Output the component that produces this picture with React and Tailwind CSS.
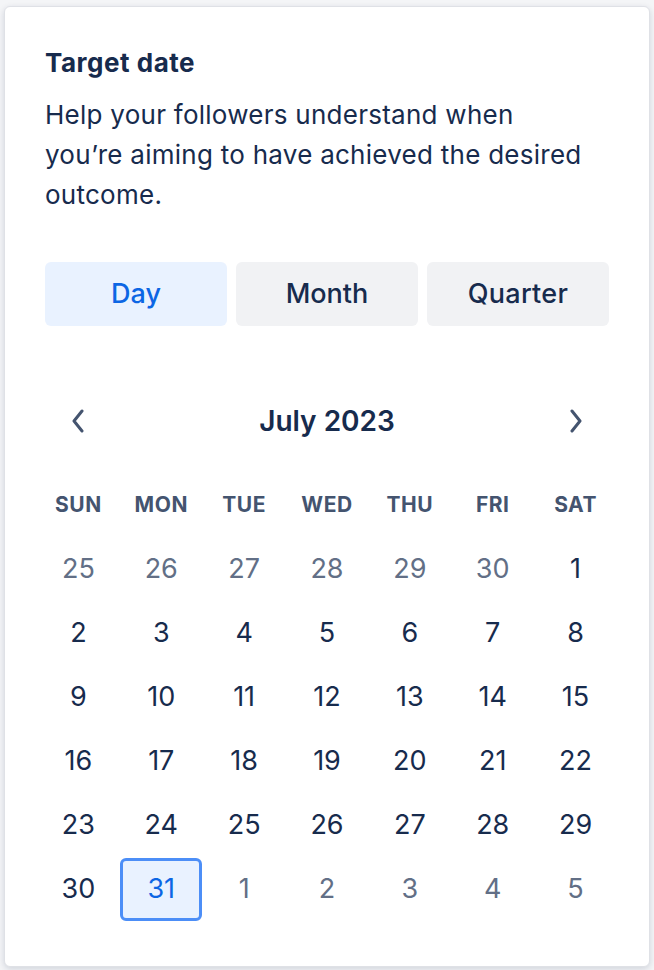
import React from "react";

const weekdays = ["SUN", "MON", "TUE", "WED", "THU", "FRI", "SAT"];

const weeks = [
    [[25, 0], [26, 0], [27, 0], [28, 0], [29, 0], [30, 0], [1, 1]],
    [[2, 1], [3, 1], [4, 1], [5, 1], [6, 1], [7, 1], [8, 1]],
    [[9, 1], [10, 1], [11, 1], [12, 1], [13, 1], [14, 1], [15, 1]],
    [[16, 1], [17, 1], [18, 1], [19, 1], [20, 1], [21, 1], [22, 1]],
    [[23, 1], [24, 1], [25, 1], [26, 1], [27, 1], [28, 1], [29, 1]],
    [[30, 1], [31, 2], [1, 0], [2, 0], [3, 0], [4, 0], [5, 0]],
];

function Chevron({ dir }) {
    return (
        <svg width="14" height="24" viewBox="0 0 14 24" fill="none">
            <polyline
                points={dir === "left" ? "11,2 3,12 11,22" : "3,2 11,12 3,22"}
                stroke="#44546F"
                strokeWidth="3"
                strokeLinecap="round"
                strokeLinejoin="round"
            />
        </svg>
    );
}

function App() {
    return (
        <div
            className="w-[654px] h-[970px] bg-[#f4f5f7] pt-[6px] pl-[4px]"
            style={{ fontFamily: "Inter, 'Noto Sans', sans-serif" }}
        >
            <div className="w-[646px] h-[961px] bg-white rounded-md border border-[#dfe1e6] shadow-[0_2px_6px_rgba(9,30,66,0.15)] px-10 pt-10">
                <h2 className="text-[26px] leading-[32px] font-bold tracking-[0.02em] text-[#172B4D]">Target date</h2>
                <p className="mt-4 text-[26px] leading-[40px] tracking-[0.01em] text-[#172B4D]">
                    Help your followers understand when
                    <br />
                    you’re aiming to have achieved the desired outcome.
                </p>

                <div className="mt-[47px] grid grid-cols-3 gap-[9px]">
                    <button className="h-16 rounded-md bg-[#E9F2FF] text-[27px] font-medium text-[#0C66E4]">Day</button>
                    <button className="h-16 rounded-md bg-[#F1F2F4] text-[27px] font-medium text-[#172B4D]">Month</button>
                    <button className="h-16 rounded-md bg-[#F1F2F4] text-[27px] font-medium tracking-[0.01em] text-[#172B4D]">Quarter</button>
                </div>

                <div className="-mx-2 mt-[63px]">
                    <div className="grid grid-cols-7 h-16 items-center">
                        <div className="flex justify-center"><Chevron dir="left" /></div>
                        <div className="col-span-5 text-center text-[28px] font-semibold text-[#172B4D]">July 2023</div>
                        <div className="flex justify-center"><Chevron dir="right" /></div>
                    </div>

                    <div className="mt-5 grid grid-cols-7">
                        {weekdays.map((d) => (
                            <div key={d} className="h-16 flex items-center justify-center text-[21px] font-bold text-[#44546F] tracking-wide">
                                {d}
                            </div>
                        ))}
                        {weeks.flat().map(([n, kind], i) => (
                            <div key={i} className="h-16 flex items-center justify-center">
                                {kind === 2 ? (
                                    <div className="w-[82px] h-[63px] flex items-center justify-center rounded-md border-[3px] border-[#4C8EF7] bg-[#E9F2FF] text-[27px] text-[#0C66E4]">
                                        {n}
                                    </div>
                                ) : (
                                    <span className={`text-[27px] ${kind === 1 ? "text-[#172B4D]" : "text-[#626F86]"}`}>{n}</span>
                                )}
                            </div>
                        ))}
                    </div>
                </div>
            </div>
        </div>
    );
}

export default App;
